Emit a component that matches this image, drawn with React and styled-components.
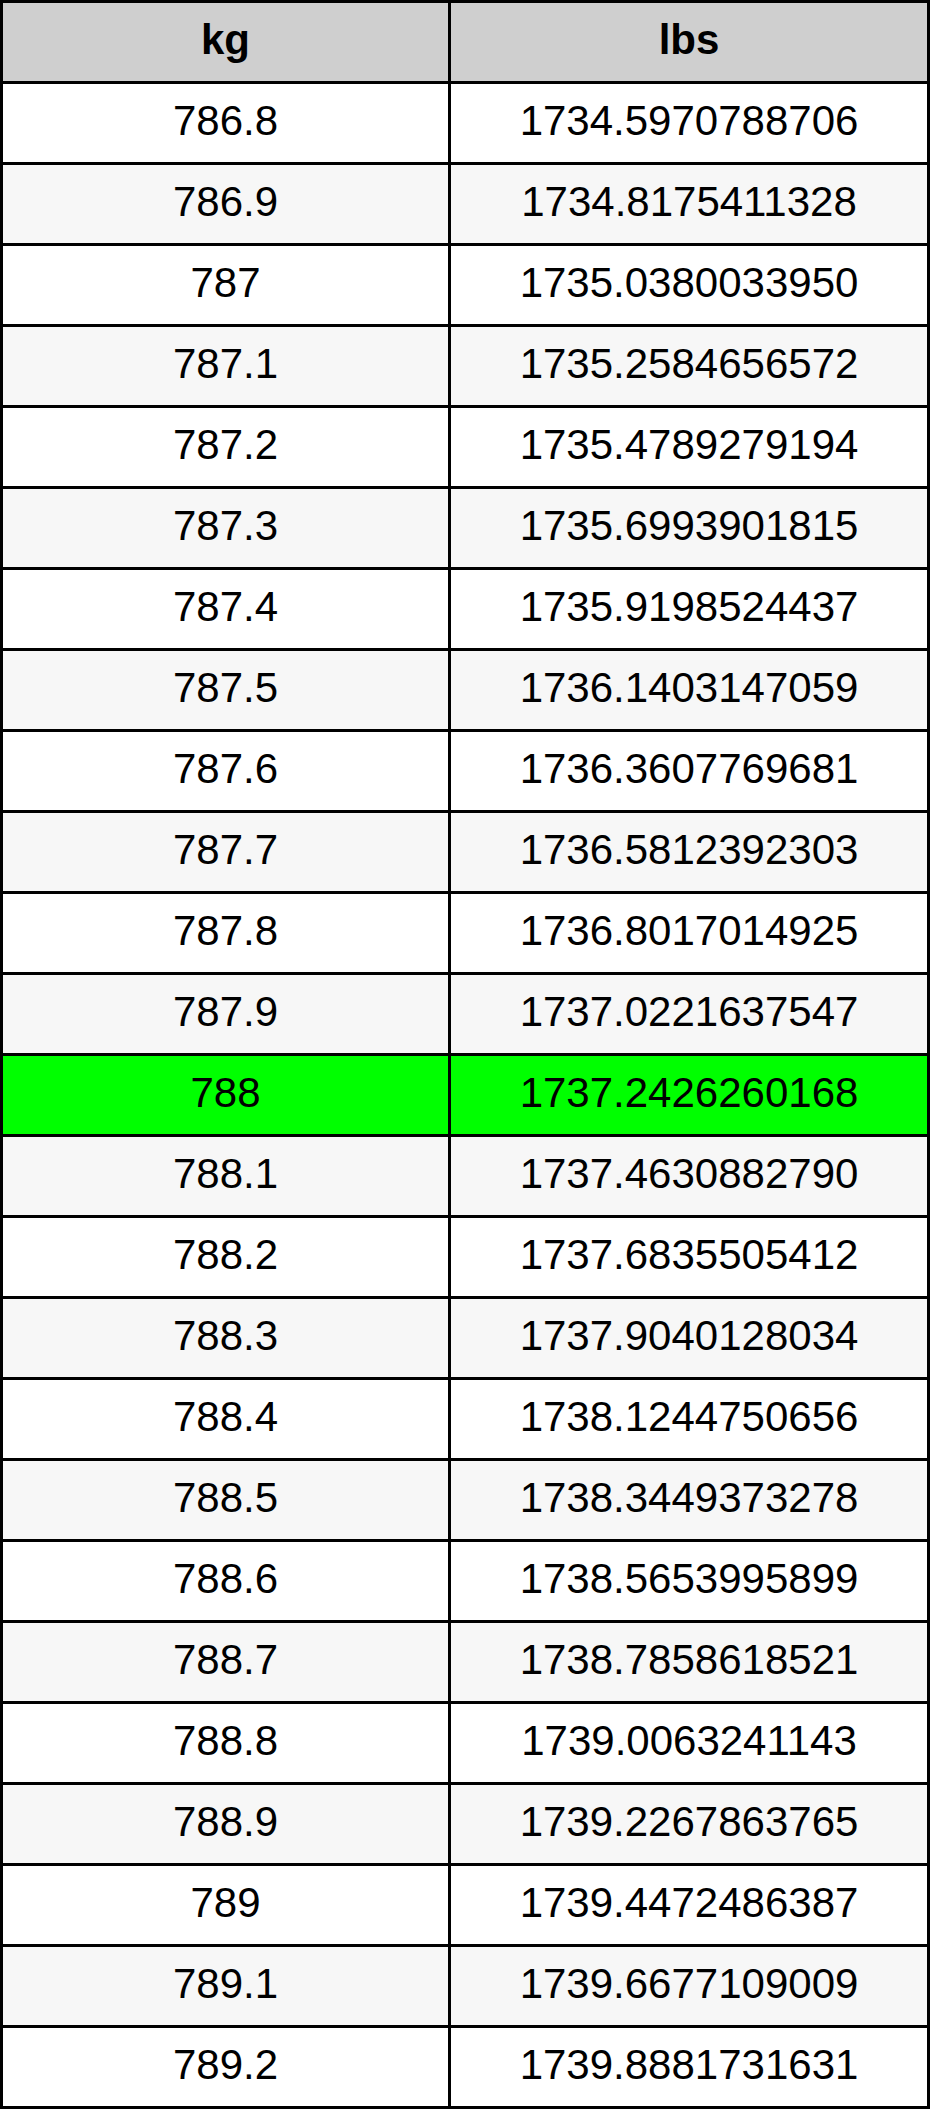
import React from "react";
import styled, { createGlobalStyle } from "styled-components";

const Global = createGlobalStyle`
  html, body { margin: 0; padding: 0; background: #ffffff; }
  body { font-family: "Liberation Sans", Arial, sans-serif; }
`;

const Table = styled.div`
  display: grid;
  grid-template-columns: 445px 476px;
  grid-auto-rows: 78px;
  gap: 3px;
  padding: 3px;
  width: 930px;
  box-sizing: border-box;
  background: #000000;
`;

const HeadCell = styled.div`
  display: flex;
  align-items: center;
  justify-content: center;
  padding-bottom: 5px;
  box-sizing: border-box;
  background: #cfcfcf;
  color: #000;
  font-size: 42px;
  font-weight: 700;
`;

const Cell = styled.div`
  display: flex;
  align-items: center;
  justify-content: center;
  padding-bottom: 4px;
  box-sizing: border-box;
  background: ${(p) => p.$bg};
  color: #000;
  font-size: 42px;
  font-weight: 400;
`;

const rows = [
  ["786.8", "1734.5970788706"],
  ["786.9", "1734.8175411328"],
  ["787", "1735.0380033950"],
  ["787.1", "1735.2584656572"],
  ["787.2", "1735.4789279194"],
  ["787.3", "1735.6993901815"],
  ["787.4", "1735.9198524437"],
  ["787.5", "1736.1403147059"],
  ["787.6", "1736.3607769681"],
  ["787.7", "1736.5812392303"],
  ["787.8", "1736.8017014925"],
  ["787.9", "1737.0221637547"],
  ["788", "1737.2426260168"],
  ["788.1", "1737.4630882790"],
  ["788.2", "1737.6835505412"],
  ["788.3", "1737.9040128034"],
  ["788.4", "1738.1244750656"],
  ["788.5", "1738.3449373278"],
  ["788.6", "1738.5653995899"],
  ["788.7", "1738.7858618521"],
  ["788.8", "1739.0063241143"],
  ["788.9", "1739.2267863765"],
  ["789", "1739.4472486387"],
  ["789.1", "1739.6677109009"],
  ["789.2", "1739.8881731631"],
];

export default function App() {
  return (
    <>
      <Global />
      <Table>
        <HeadCell>kg</HeadCell>
        <HeadCell>lbs</HeadCell>
        {rows.map(([kg, lbs], i) => {
          const bg = kg === "788" ? "#00ff00" : i % 2 === 1 ? "#f7f7f7" : "#ffffff";
          return (
            <React.Fragment key={kg}>
              <Cell $bg={bg}>{kg}</Cell>
              <Cell $bg={bg}>{lbs}</Cell>
            </React.Fragment>
          );
        })}
      </Table>
    </>
  );
}
